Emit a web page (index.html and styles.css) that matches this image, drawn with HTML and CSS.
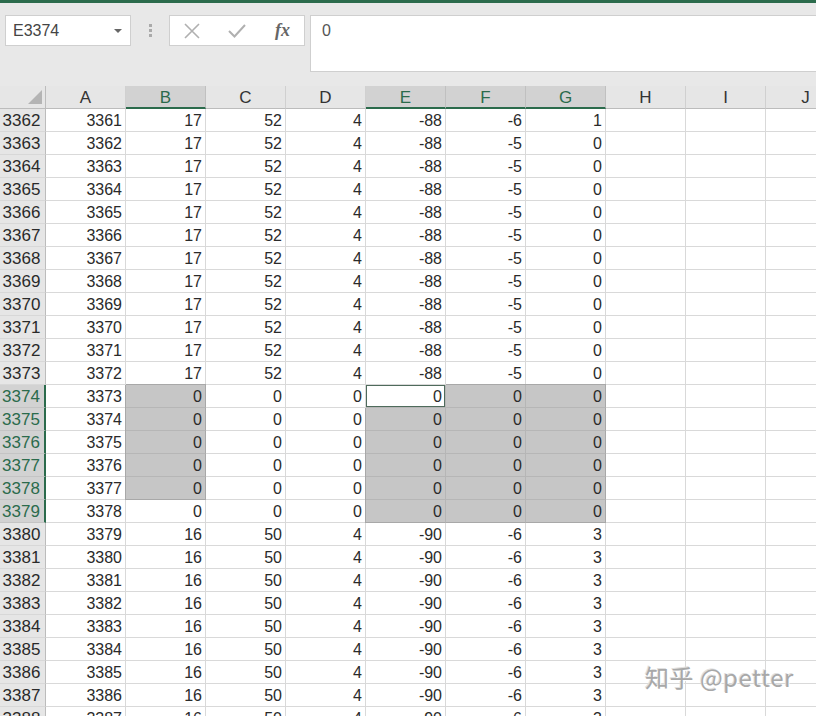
FILE: index.html
```html
<!DOCTYPE html>
<html>
<head>
<meta charset="utf-8">
<link rel="stylesheet" href="styles.css">
</head>
<body>
<div class="app">
  <div class="toolbar">
    <div class="namebox"><span>E3374</span><span class="caret"></span></div>
    <div class="grip"><i></i><i></i><i></i></div>
    <div class="fbtns">
      <svg class="ic" width="18" height="18" viewBox="0 0 18 18"><path d="M2 2L16 16M16 2L2 16" stroke="#b0b0b0" stroke-width="1.6" fill="none"/></svg>
      <svg class="ic" width="18" height="18" viewBox="0 0 18 18"><path d="M1 9L6.5 14.5L17 3" stroke="#b0b0b0" stroke-width="2" fill="none"/></svg>
      <span class="fx">fx</span>
    </div>
    <div class="formula">0</div>
  </div>
  <div class="sheet">
    <div class="row head">
      <div class="rh corner"><span class="tri"></span></div>
      <div class="ch">A</div><div class="ch on">B</div><div class="ch">C</div><div class="ch">D</div><div class="ch on">E</div><div class="ch on">F</div><div class="ch on">G</div><div class="ch">H</div><div class="ch">I</div><div class="ch">J</div>
    </div>
    <div class="row"><div class="rh">3362</div><div class="c">3361</div><div class="c">17</div><div class="c">52</div><div class="c">4</div><div class="c">-88</div><div class="c">-6</div><div class="c">1</div><div class="c"></div><div class="c"></div><div class="c"></div></div>
    <div class="row"><div class="rh">3363</div><div class="c">3362</div><div class="c">17</div><div class="c">52</div><div class="c">4</div><div class="c">-88</div><div class="c">-5</div><div class="c">0</div><div class="c"></div><div class="c"></div><div class="c"></div></div>
    <div class="row"><div class="rh">3364</div><div class="c">3363</div><div class="c">17</div><div class="c">52</div><div class="c">4</div><div class="c">-88</div><div class="c">-5</div><div class="c">0</div><div class="c"></div><div class="c"></div><div class="c"></div></div>
    <div class="row"><div class="rh">3365</div><div class="c">3364</div><div class="c">17</div><div class="c">52</div><div class="c">4</div><div class="c">-88</div><div class="c">-5</div><div class="c">0</div><div class="c"></div><div class="c"></div><div class="c"></div></div>
    <div class="row"><div class="rh">3366</div><div class="c">3365</div><div class="c">17</div><div class="c">52</div><div class="c">4</div><div class="c">-88</div><div class="c">-5</div><div class="c">0</div><div class="c"></div><div class="c"></div><div class="c"></div></div>
    <div class="row"><div class="rh">3367</div><div class="c">3366</div><div class="c">17</div><div class="c">52</div><div class="c">4</div><div class="c">-88</div><div class="c">-5</div><div class="c">0</div><div class="c"></div><div class="c"></div><div class="c"></div></div>
    <div class="row"><div class="rh">3368</div><div class="c">3367</div><div class="c">17</div><div class="c">52</div><div class="c">4</div><div class="c">-88</div><div class="c">-5</div><div class="c">0</div><div class="c"></div><div class="c"></div><div class="c"></div></div>
    <div class="row"><div class="rh">3369</div><div class="c">3368</div><div class="c">17</div><div class="c">52</div><div class="c">4</div><div class="c">-88</div><div class="c">-5</div><div class="c">0</div><div class="c"></div><div class="c"></div><div class="c"></div></div>
    <div class="row"><div class="rh">3370</div><div class="c">3369</div><div class="c">17</div><div class="c">52</div><div class="c">4</div><div class="c">-88</div><div class="c">-5</div><div class="c">0</div><div class="c"></div><div class="c"></div><div class="c"></div></div>
    <div class="row"><div class="rh">3371</div><div class="c">3370</div><div class="c">17</div><div class="c">52</div><div class="c">4</div><div class="c">-88</div><div class="c">-5</div><div class="c">0</div><div class="c"></div><div class="c"></div><div class="c"></div></div>
    <div class="row"><div class="rh">3372</div><div class="c">3371</div><div class="c">17</div><div class="c">52</div><div class="c">4</div><div class="c">-88</div><div class="c">-5</div><div class="c">0</div><div class="c"></div><div class="c"></div><div class="c"></div></div>
    <div class="row"><div class="rh">3373</div><div class="c">3372</div><div class="c">17</div><div class="c">52</div><div class="c">4</div><div class="c">-88</div><div class="c">-5</div><div class="c">0</div><div class="c"></div><div class="c"></div><div class="c"></div></div>
    <div class="row"><div class="rh on">3374</div><div class="c">3373</div><div class="c sel st sl sr">0</div><div class="c">0</div><div class="c">0</div><div class="c active">0</div><div class="c sel st">0</div><div class="c sel st sr">0</div><div class="c"></div><div class="c"></div><div class="c"></div></div>
    <div class="row"><div class="rh on">3375</div><div class="c">3374</div><div class="c sel sl sr">0</div><div class="c">0</div><div class="c">0</div><div class="c sel sl">0</div><div class="c sel">0</div><div class="c sel sr">0</div><div class="c"></div><div class="c"></div><div class="c"></div></div>
    <div class="row"><div class="rh on">3376</div><div class="c">3375</div><div class="c sel sl sr">0</div><div class="c">0</div><div class="c">0</div><div class="c sel sl">0</div><div class="c sel">0</div><div class="c sel sr">0</div><div class="c"></div><div class="c"></div><div class="c"></div></div>
    <div class="row"><div class="rh on">3377</div><div class="c">3376</div><div class="c sel sl sr">0</div><div class="c">0</div><div class="c">0</div><div class="c sel sl">0</div><div class="c sel">0</div><div class="c sel sr">0</div><div class="c"></div><div class="c"></div><div class="c"></div></div>
    <div class="row"><div class="rh on">3378</div><div class="c">3377</div><div class="c sel sl sr sb">0</div><div class="c">0</div><div class="c">0</div><div class="c sel sl">0</div><div class="c sel">0</div><div class="c sel sr">0</div><div class="c"></div><div class="c"></div><div class="c"></div></div>
    <div class="row"><div class="rh on">3379</div><div class="c">3378</div><div class="c">0</div><div class="c">0</div><div class="c">0</div><div class="c sel sl sb">0</div><div class="c sel sb">0</div><div class="c sel sr sb">0</div><div class="c"></div><div class="c"></div><div class="c"></div></div>
    <div class="row"><div class="rh">3380</div><div class="c">3379</div><div class="c">16</div><div class="c">50</div><div class="c">4</div><div class="c">-90</div><div class="c">-6</div><div class="c">3</div><div class="c"></div><div class="c"></div><div class="c"></div></div>
    <div class="row"><div class="rh">3381</div><div class="c">3380</div><div class="c">16</div><div class="c">50</div><div class="c">4</div><div class="c">-90</div><div class="c">-6</div><div class="c">3</div><div class="c"></div><div class="c"></div><div class="c"></div></div>
    <div class="row"><div class="rh">3382</div><div class="c">3381</div><div class="c">16</div><div class="c">50</div><div class="c">4</div><div class="c">-90</div><div class="c">-6</div><div class="c">3</div><div class="c"></div><div class="c"></div><div class="c"></div></div>
    <div class="row"><div class="rh">3383</div><div class="c">3382</div><div class="c">16</div><div class="c">50</div><div class="c">4</div><div class="c">-90</div><div class="c">-6</div><div class="c">3</div><div class="c"></div><div class="c"></div><div class="c"></div></div>
    <div class="row"><div class="rh">3384</div><div class="c">3383</div><div class="c">16</div><div class="c">50</div><div class="c">4</div><div class="c">-90</div><div class="c">-6</div><div class="c">3</div><div class="c"></div><div class="c"></div><div class="c"></div></div>
    <div class="row"><div class="rh">3385</div><div class="c">3384</div><div class="c">16</div><div class="c">50</div><div class="c">4</div><div class="c">-90</div><div class="c">-6</div><div class="c">3</div><div class="c"></div><div class="c"></div><div class="c"></div></div>
    <div class="row"><div class="rh">3386</div><div class="c">3385</div><div class="c">16</div><div class="c">50</div><div class="c">4</div><div class="c">-90</div><div class="c">-6</div><div class="c">3</div><div class="c"></div><div class="c"></div><div class="c"></div></div>
    <div class="row"><div class="rh">3387</div><div class="c">3386</div><div class="c">16</div><div class="c">50</div><div class="c">4</div><div class="c">-90</div><div class="c">-6</div><div class="c">3</div><div class="c"></div><div class="c"></div><div class="c"></div></div>
    <div class="row"><div class="rh">3388</div><div class="c">3387</div><div class="c">16</div><div class="c">50</div><div class="c">4</div><div class="c">-90</div><div class="c">-6</div><div class="c">3</div><div class="c"></div><div class="c"></div><div class="c"></div></div>
    <div class="watermark">知乎 @petter</div>
  </div>
</div>
</body>
</html>
```
FILE: styles.css
```css
html, body {
  margin: 0;
  padding: 0;
  background: #ffffff;
}
.app {
  width: 816px;
  height: 716px;
  overflow: hidden;
  font-family: "Liberation Sans", Arial, sans-serif;
  color: #222;
}
.toolbar {
  background: #e8e8e8;
  border-top: 3px solid #2b6b4c;
  display: flex;
  align-items: flex-start;
  padding-top: 12px;
  box-sizing: border-box;
  height: 86px;
}
.namebox {
  margin-left: 5px;
  width: 126px;
  height: 31px;
  box-sizing: border-box;
  background: #fff;
  border: 1px solid #cfcfcf;
  display: flex;
  align-items: center;
  justify-content: space-between;
  padding: 0 8px 0 7px;
  font-size: 16px;
  color: #444;
}
.caret {
  width: 0;
  height: 0;
  border-left: 4px solid transparent;
  border-right: 4px solid transparent;
  border-top: 4px solid #666;
}
.grip {
  width: 38px;
  height: 31px;
  display: flex;
  flex-direction: column;
  align-items: center;
  justify-content: center;
  gap: 2px;
}
.grip i {
  width: 3px;
  height: 3px;
  background: #aaa;
  display: block;
}
.fbtns {
  width: 136px;
  height: 31px;
  box-sizing: border-box;
  background: #fff;
  border: 1px solid #cfcfcf;
  display: flex;
  align-items: center;
  padding-left: 13px;
  gap: 27px;
}
.fx {
  font-family: "Liberation Serif", serif;
  font-style: italic;
  font-weight: bold;
  font-size: 18px;
  color: #666;
  margin-left: 2px;
}
.formula {
  margin-left: 5px;
  flex: 1;
  height: 57px;
  box-sizing: border-box;
  background: #fff;
  border: 1px solid #cfcfcf;
  border-right: none;
  padding: 6px 0 0 11px;
  font-size: 16px;
  color: #555;
}
.sheet {
  position: relative;
  width: 816px;
  overflow: hidden;
}
.row {
  display: flex;
  width: 846px;
  height: 23px;
}
.rh {
  width: 46px;
  flex: none;
  box-sizing: border-box;
  background: #e6e6e6;
  border-right: 1px solid #bcbcbc;
  border-bottom: 1px solid #d8d8d8;
  font-size: 17px;
  line-height: 23px;
  text-align: center;
  color: #2a2a2a;
  padding-right: 2px;
}
.rh.on {
  background: #d2d2d2;
  color: #2b6b4c;
  border-right: 2px solid #2b6b4c;
  border-bottom-color: #c4c4c4;
}
.corner {
  position: relative;
  border-bottom: 1px solid #bcbcbc;
}
.tri {
  position: absolute;
  right: 3px;
  bottom: 4px;
  width: 0;
  height: 0;
  border-left: 14px solid transparent;
  border-bottom: 14px solid #b4b4b4;
}
.ch {
  width: 80px;
  flex: none;
  box-sizing: border-box;
  background: #e6e6e6;
  border-right: 1px solid #d0d0d0;
  border-bottom: 1px solid #bcbcbc;
  font-size: 17px;
  line-height: 23px;
  text-align: center;
  color: #333;
}
.ch.on {
  background: #d2d2d2;
  color: #2b6b4c;
  border-bottom: 2px solid #2b6b4c;
  border-right-color: #c0c0c0;
}
.c {
  width: 80px;
  flex: none;
  box-sizing: border-box;
  border-right: 1px solid #d9d9d9;
  border-bottom: 1px solid #d9d9d9;
  font-size: 16px;
  line-height: 24px;
  text-align: right;
  padding-right: 3px;
  color: #2a2a2a;
}
.c.sel {
  background: #c6c6c6;
  border-right-color: #b6b6b6;
  border-bottom-color: #b6b6b6;
}
.c.active {
  background: #fff;
  box-shadow: inset 0 0 0 1px #4f6b5c;
  border-right-color: #b6b6b6;
  border-bottom-color: #b6b6b6;
}
.c.sl { box-shadow: -1px 0 0 #a8a8a8; }
.c.sr { border-right-color: #a8a8a8; }
.c.st { box-shadow: 0 -1px 0 #a8a8a8; }
.c.sl.st { box-shadow: -1px 0 0 #a8a8a8, 0 -1px 0 #a8a8a8; }
.c.sb { border-bottom-color: #a8a8a8; }
.watermark {
  position: absolute;
  left: 645px;
  top: 573px;
  font-family: "Noto Sans CJK SC", "Noto Sans", sans-serif;
  font-size: 24px;
  color: #a8a8a8;
  text-shadow: 1px 1px 0 #fff, -1px -1px 0 #e0e0e0;
  letter-spacing: 0.5px;
  white-space: nowrap;
}
```
